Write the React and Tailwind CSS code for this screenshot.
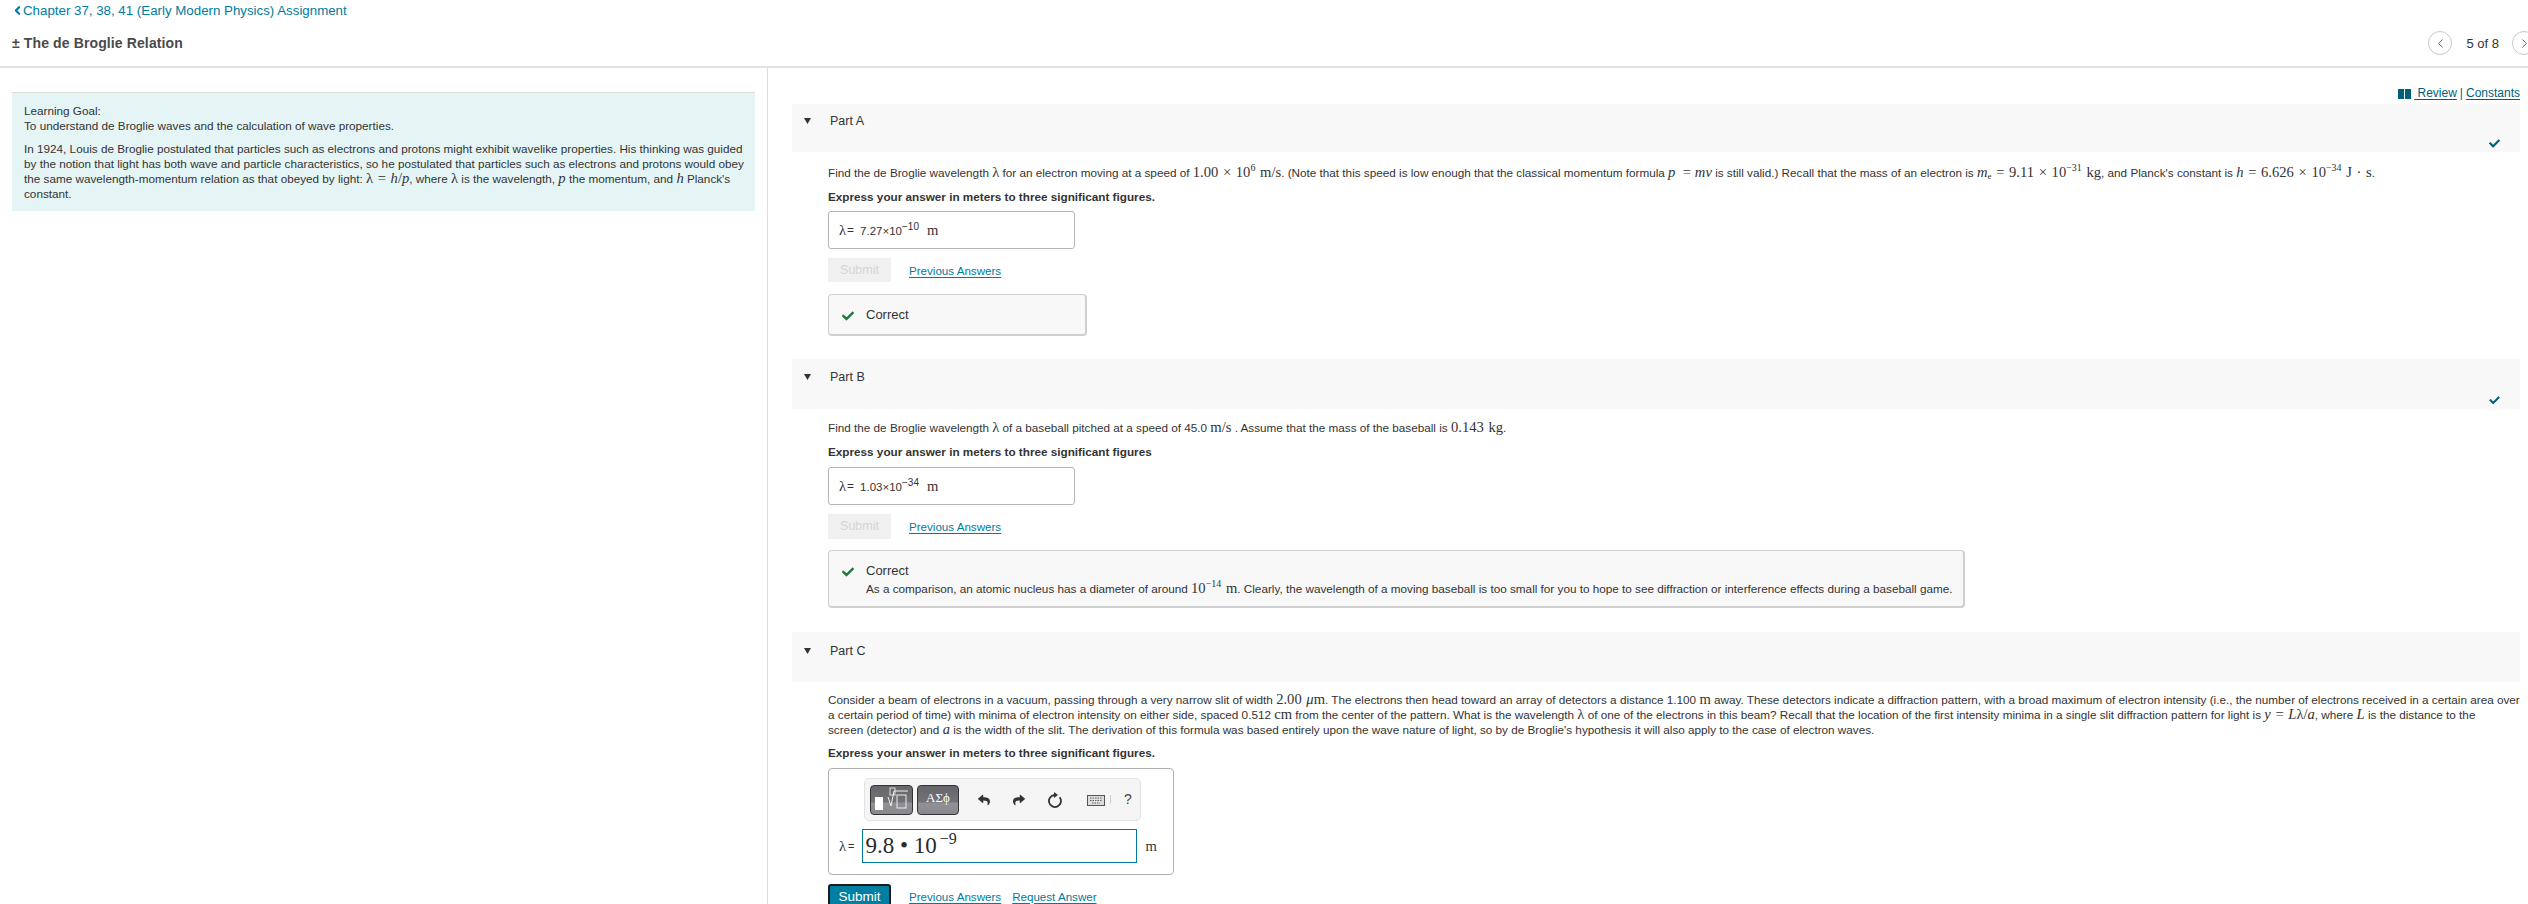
import { ChevronLeft, ChevronRight } from "lucide-react";
import { FaCheck, FaReply, FaShare } from "react-icons/fa";

const serif = "font-['Liberation_Serif',serif] text-[14.6px] leading-[0] [word-spacing:1px]";

function M({ children, i }) {
  return <span className={`${serif} ${i ? "italic" : ""}`}>{children}</span>;
}

function Sup({ children }) {
  return <sup className="static font-['Liberation_Serif',serif] text-[10px] leading-[0] align-[6px]">{children}</sup>;
}

function PartHeader({ name, done, height, label }) {
  return (
    <div className={`ml-6 mr-2 bg-[#f8f8f8] flex flex-col ${height}`}>
      <div className={`flex items-center ${label} pl-[12px] text-[12.5px] text-[#333]`}>
        <svg width="7" height="6" viewBox="0 0 7 6" className="mr-[19px]">
          <polygon points="0,0 7,0 3.5,6" fill="#333" />
        </svg>
        {name}
      </div>
      {done && <FaCheck className="self-end mr-[20px] mt-auto mb-[3px] text-[#00607c] text-[11px]" />}
    </div>
  );
}

function AnsweredInput({ value, exp }) {
  return (
    <div className="flex items-center w-[247px] h-[38px] pl-[10px] border border-[#b5b5b5] rounded-[3px] text-[#333]">
      <M>λ</M>
      <span className="ml-[1px] mr-[6px] text-[12px]">=</span>
      <span className="text-[11.5px] mt-[2px]">{value}×10<sup className="static text-[10px] leading-[0] align-[5px]">{exp}</sup></span>
      <span className="ml-[8px]"><M>m</M></span>
    </div>
  );
}

function Actions({ h, disabled, request }) {
  return (
    <div className="flex items-center">
      {disabled ? (
        <div className={`w-[63px] ${h} bg-[#f0f0f0] text-[#d5d5d5] text-[12.5px] flex items-center justify-center`}>Submit</div>
      ) : (
        <div className={`w-[63px] ${h} bg-[#007fa3] border-2 border-[#1b1b1b] rounded-[3px] text-white text-[13.5px] font-medium flex items-center justify-center`}>Submit</div>
      )}
      <a className="ml-[18px] text-[11.6px] text-[#007c9e] underline underline-offset-2">Previous Answers</a>
      {request && <a className="ml-[11px] text-[11.6px] text-[#007c9e] underline underline-offset-2">Request Answer</a>}
    </div>
  );
}

function CorrectBox({ className, children }) {
  return (
    <div className={`bg-[#f8f8f8] border border-[#cfcfcf] border-b-2 border-r-2 rounded-[4px] flex flex-col justify-center pl-[37px] relative ${className}`}>
      <FaCheck className="absolute left-[13px] top-[15px] text-[#1d7a3c] text-[12px]" />
      <div className="text-[13px] leading-[18px] text-[#333]">Correct</div>
      {children}
    </div>
  );
}

function ToolButton({ children, width }) {
  return (
    <div className={`${width} h-[30px] border border-[#333] rounded-[4px] bg-[linear-gradient(#66666a_0%,#737377_58%,#929296_60%,#88888c_100%)] flex items-start justify-center text-white`}>
      {children}
    </div>
  );
}

export default function App() {
  return (
    <div className="w-[2528px] h-[904px] overflow-hidden bg-white font-['Liberation_Sans',Arial,sans-serif] text-[11.72px] leading-[15px] text-[#333]">
      {/* Header */}
      <div className="h-[68px] border-b-2 border-[#e2e2e2] relative">
        <div className="flex items-center h-[20px] pl-[12px] text-[13.3px] text-[#007c9e]">
          <ChevronLeft size={13} strokeWidth={4} className="-ml-[1px] -mr-[1px]" />
          Chapter 37, 38, 41 (Early Modern Physics) Assignment
        </div>
        <div className="flex items-center h-[20px] mt-[13px] pl-[12px] pr-0">
          <span className="text-[14px] font-bold tracking-[0.12px] text-[#4a4a4a]">± The de Broglie Relation</span>
          <div className="ml-auto flex items-center text-[13px] text-[#333] -mr-[8px]">
            <div className="w-[24px] h-[24px] rounded-full border border-[#c8c8c8] flex items-center justify-center text-[#4a6a80]">
              <ChevronLeft size={15} strokeWidth={1.6} />
            </div>
            <span className="ml-[14px] mr-[13px]">5 of 8</span>
            <div className="w-[24px] h-[24px] rounded-full border border-[#c8c8c8] flex items-center justify-center text-[#4a6a80]">
              <ChevronRight size={15} strokeWidth={1.6} />
            </div>
          </div>
        </div>
      </div>

      <div className="flex h-[836px]">
        {/* Left column */}
        <div className="w-[768px] shrink-0 border-r border-[#d8dde0] pt-[24px] pl-[12px] pr-[12px]">
          <div className="bg-[#e5f5f6] border-t border-[#dcdcdc] h-[119px] pt-[10px] pl-[12px] pr-[4px]">
            <div>Learning Goal:</div>
            <div>To understand de Broglie waves and the calculation of wave properties.</div>
            <p className="mt-[8px]">
              In 1924, Louis de Broglie postulated that particles such as electrons and protons might exhibit wavelike properties. His thinking was guided by the notion that light has both wave and particle characteristics, so he postulated that particles such as electrons and protons would obey the same wavelength-momentum relation as that obeyed by light: <M>λ = <i>h</i>/<i>p</i></M>, where <M>λ</M> is the wavelength, <M i>p</M> the momentum, and <M i>h</M> Planck's constant.
            </p>
          </div>
        </div>

        {/* Right column */}
        <div className="flex-1 min-w-0">
          <div className="h-[36px] flex items-start justify-end pr-2 pt-[18px] text-[12px] text-[#00607c]">
            <svg width="13" height="10" viewBox="0 0 13 10" className="mt-[3px] mr-[3px]">
              <rect x="0" y="0" width="6" height="10" fill="#00607c" />
              <rect x="7" y="0" width="6" height="10" fill="#00607c" />
            </svg>
            <a className="underline underline-offset-2">&nbsp;Review</a>
            <span className="mx-[3px]">|</span>
            <a className="underline underline-offset-2">Constants</a>
          </div>

          {/* Part A */}
          <PartHeader name="Part A" done height="h-[48px]" label="h-[34px]" />
          <div className="pl-[60px] pt-[13px]">
            <p className="whitespace-nowrap">
              Find the de Broglie wavelength <M>λ</M> for an electron moving at a speed of <M>1.00 × 10<Sup>6</Sup> m/s</M>. (Note that this speed is low enough that the classical momentum formula <M i>p</M> <M><span className="mx-[4px]">=</span><i>mv</i></M> is still valid.) Recall that the mass of an electron is <M><i>m</i><sub className="text-[9px] leading-[0]">e</sub> = 9.11 × 10<Sup>−31</Sup> kg</M>, and Planck's constant is <M><i>h</i> = 6.626 × 10<Sup>−34</Sup> J · s</M>.
            </p>
            <p className="mt-[9px] font-bold">Express your answer in meters to three significant figures.</p>
            <div className="mt-[7px]"><AnsweredInput value="7.27" exp="−10" /></div>
            <div className="mt-[9px]"><Actions disabled h="h-[24px]" /></div>
            <CorrectBox className="mt-[12px] w-[259px] h-[42px]" />
          </div>

          {/* Part B */}
          <div className="mt-[23px]"><PartHeader name="Part B" done height="h-[50px]" label="h-[38px]" /></div>
          <div className="pl-[60px] pt-[11px]">
            <p className="whitespace-nowrap">
              Find the de Broglie wavelength <M>λ</M> of a baseball pitched at a speed of 45.0 <M>m/s</M> . Assume that the mass of the baseball is <M>0.143 kg</M>.
            </p>
            <p className="mt-[9px] font-bold">Express your answer in meters to three significant figures</p>
            <div className="mt-[8px]"><AnsweredInput value="1.03" exp="−34" /></div>
            <div className="mt-[9px]"><Actions disabled h="h-[25px]" /></div>
            <CorrectBox className="mt-[11px] w-[1137px] h-[58px]">
              <div className="whitespace-nowrap mt-[1px]">
                As a comparison, an atomic nucleus has a diameter of around <M>10<Sup>−14</Sup> m</M>. Clearly, the wavelength of a moving baseball is too small for you to hope to see diffraction or interference effects during a baseball game.
              </div>
            </CorrectBox>
          </div>

          {/* Part C */}
          <div className="mt-[24px]"><PartHeader name="Part C" height="h-[50px]" label="h-[38px]" /></div>
          <div className="pl-[60px] pt-[10px]">
            <p className="whitespace-nowrap">
              Consider a beam of electrons in a vacuum, passing through a very narrow slit of width <M>2.00 <i>μ</i>m</M>. The electrons then head toward an array of detectors a distance 1.100 <M>m</M> away. These detectors indicate a diffraction pattern, with a broad maximum of electron intensity (i.e., the number of electrons received in a certain area over<br />
              a certain period of time) with minima of electron intensity on either side, spaced 0.512 <M>cm</M> from the center of the pattern. What is the wavelength <M>λ</M> of one of the electrons in this beam? Recall that the location of the first intensity minima in a single slit diffraction pattern for light is <M><i>y</i> = <i>L</i>λ/<i>a</i></M>, where <M i>L</M> is the distance to the<br />
              screen (detector) and <M i>a</M> is the width of the slit. The derivation of this formula was based entirely upon the wave nature of light, so by de Broglie's hypothesis it will also apply to the case of electron waves.
            </p>
            <p className="mt-[8px] font-bold">Express your answer in meters to three significant figures.</p>

            <div className="mt-[8px] w-[346px] h-[107px] border border-[#b0b0b0] rounded-[4px] pt-[9px]">
              <div className="ml-[35px] w-[277px] h-[43px] bg-[#f5f5f5] border border-[#e2e2e2] rounded-[5px] flex items-center pl-[5px]">
                <ToolButton width="w-[43px]">
                  <svg width="34" height="26" viewBox="0 0 34 26" className="mt-[1px]">
                    <rect x="0" y="10" width="8" height="13" fill="#fff" />
                    <rect x="15" y="1" width="5" height="7" fill="none" stroke="#ddd" strokeWidth="1" />
                    <path d="M13 10 L16 19 L19 4 L33 4" fill="none" stroke="#eee" strokeWidth="1" />
                    <rect x="22" y="8" width="9" height="13" fill="none" stroke="#eee" strokeWidth="1" />
                  </svg>
                </ToolButton>
                <div className="ml-[4px]">
                  <ToolButton width="w-[42px]">
                    <span className="font-['Liberation_Serif',serif] text-[13px] leading-[24px]">ΑΣϕ</span>
                  </ToolButton>
                </div>
                <FaReply className="ml-[19px] text-[12px] text-[#333]" />
                <FaShare className="ml-[23px] text-[12px] text-[#333]" />
                <svg width="16" height="16" viewBox="0 0 16 16" className="ml-[22px]">
                  <path d="M12.6 5.2 A6 6 0 1 1 8 3" fill="none" stroke="#333" strokeWidth="1.8" />
                  <polygon points="7,0 11,3 7,6" fill="#333" />
                </svg>
                <svg width="18" height="11" viewBox="0 0 18 11" className="ml-[24px] mt-[2px]">
                  <rect x="0.5" y="0.5" width="17" height="10" fill="#ddd" stroke="#555" />
                  <path d="M3 3h12M3 5.5h12M5 8h8" stroke="#666" strokeWidth="1" strokeDasharray="1.5 1" />
                </svg>
                <div className="ml-[5px] w-px h-[9px] bg-[#ccc]" />
                <span className="ml-[13px] text-[14px] text-[#444]">?</span>
              </div>
              <div className="flex items-center mt-[8px] pl-[10px]">
                <M>λ</M>
                <span className="ml-[2px] text-[11px]">=</span>
                <div className="ml-[7px] w-[275px] h-[34px] border border-[#007c9e] pl-[3px] font-['Liberation_Serif',serif] text-[23px] leading-[32px] text-[#2a2a2a] whitespace-nowrap">
                  9.8 • 10<sup className="static text-[16px] leading-[0] align-[9px] ml-[3px]">−9</sup>
                </div>
                <span className="ml-[9px]"><M>m</M></span>
              </div>
            </div>
            <div className="mt-[9px]"><Actions h="h-[24px]" request /></div>
          </div>
        </div>
      </div>
    </div>
  );
}
